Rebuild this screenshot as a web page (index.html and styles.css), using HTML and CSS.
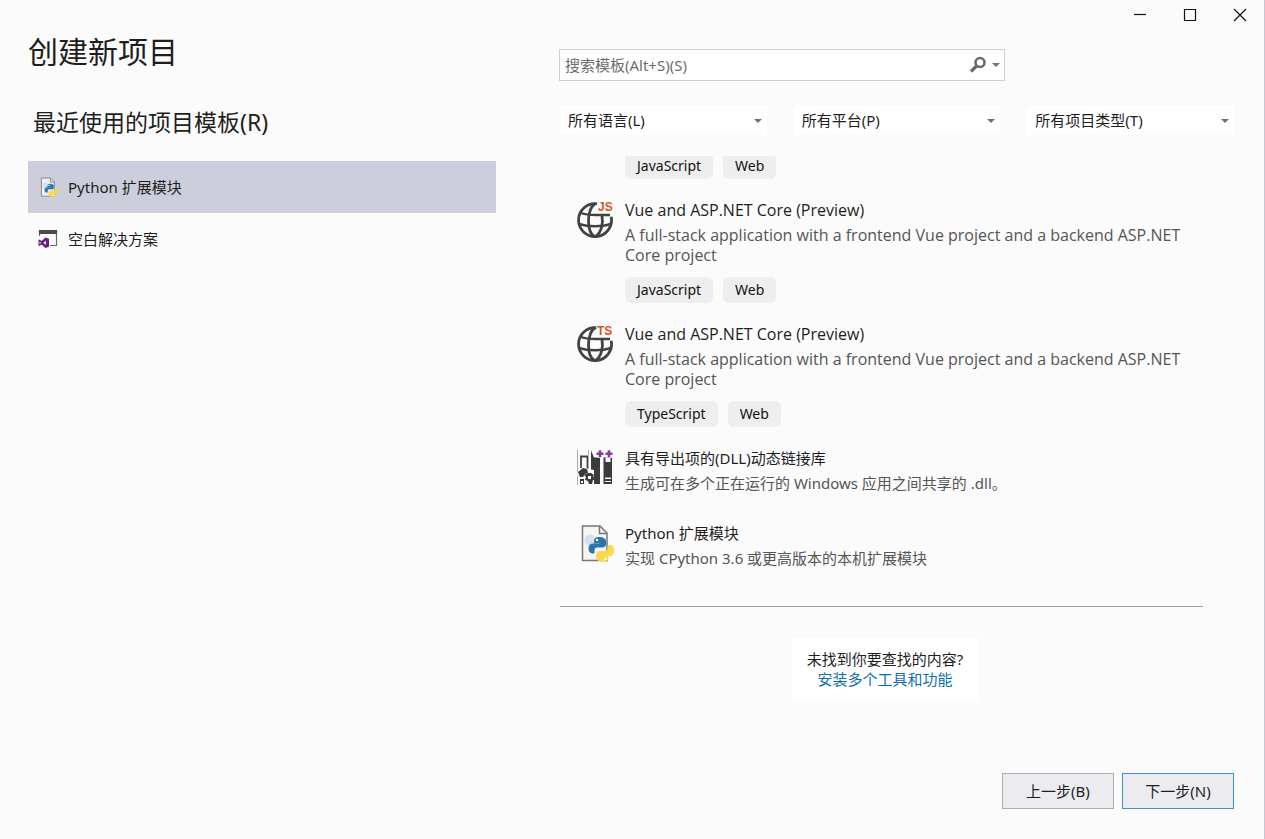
FILE: index.html
```html
<!DOCTYPE html>
<html lang="zh-CN">
<head>
<meta charset="utf-8">
<meta name="viewport" content="width=device-width, initial-scale=1">
<title>创建新项目</title>
<link rel="stylesheet" href="styles.css">
</head>
<body class="window">
<svg class="symbols" aria-hidden="true">
  <symbol id="python-file" viewBox="0 0 38 38">
    <path d="M6.500 2h17.500l7 7v27.500h-24.500z" fill="#f3f3f4" fill-opacity=".85" stroke="#77777a" stroke-width="1.500"/>
    <path d="M23.500 2v7.500h7.500" fill="none" stroke="#77777a" stroke-width="1.500"/>
    <circle cx="14" cy="16" r="5.500" fill="#cfe2ef"/>
    <path d="M23 13.500c-4 0-4.500 1.500-4.500 3.500v2h6v1h-8c-2.500 0-3.500 2-3.500 4.500s1 4.500 3 4.500h2v-2.500c0-2.500 1.500-3.500 3.500-3.500h5c2 0 3-1 3-3v-3c0-2-2-3.500-6.500-3.500z" fill="#2f73ab" stroke="#2f73ab"/>
    <path d="M27.500 37.200c4 0 4.500-1.500 4.500-3.500v-1.200h-5.500v-1h7.500c2.500 0 3.500-2 3.500-5s-1-5-3-5h-2.500v2.500c0 2.500-1.500 3.500-3.500 3.500h-5c-2 0-3 1-3 3v3.200c0 2 2 3.500 7 3.500z" fill="#fbd94f" stroke="#fbd94f"/>
    <circle cx="21" cy="16" r="1.200" fill="#fff"/><circle cx="29.500" cy="35" r="1.200" fill="#fff"/>
  </symbol>
  <symbol id="globe" viewBox="0 0 38 38">
    <g fill="none" stroke="#424242" stroke-width="2.800">
      <path d="M21 2.700a16.500 16.500 0 1 0 14.200 13"/>
      <path d="M19 3c-4 2-6.500 9-6.500 17s2.500 13.500 6 15.500"/>
      <path d="M26 14c1.500 9-1 18-6.500 21.500"/>
      <path d="M5 12c4 1.500 9 2 15 2h14" stroke-width="2.400"/>
      <path d="M3 23c9 3 23 3 32 0" stroke-width="2.400"/>
    </g>
  </symbol>
  <symbol id="arrow" viewBox="0 0 8 4"><path d="M0 0h8l-4 4z" fill="#717171"/></symbol>
</svg>

<header class="titlebar">
  <button class="caption" type="button" aria-label="最小化"><svg width="14" height="14"><path d="M1 6.500h12"/></svg></button>
  <button class="caption" type="button" aria-label="最大化"><svg width="14" height="14"><path d="M1.500 1.500h11v11h-11z"/></svg></button>
  <button class="caption" type="button" aria-label="关闭"><svg width="14" height="14"><path d="M1 1l12 12M13 1l-12 12"/></svg></button>
</header>

<main class="content">
  <section class="recent">
    <h1 class="title">创建新项目</h1>
    <h2 class="subtitle">最近使用的项目模板(R)</h2>
    <ul class="recent-list">
      <li><button class="recent-item selected" type="button">
        <svg class="small-icon" viewBox="0 0 38 38"><use href="#python-file"/></svg>
        <span>Python 扩展模块</span>
      </button></li>
      <li><button class="recent-item" type="button">
        <svg class="small-icon" viewBox="0 0 20 20">
          <path d="M1.500 7V1.500h17v15H12" fill="none" stroke="#6b6b6b" stroke-width="1.200"/>
          <path d="M1 1h18v4H1z" fill="#4a4a4a"/>
          <path d="M7.500 8.500l3.500 1.200v8l-3.500 1.300-4-3.500-2 1.500-1-.500v-5.500l1-.500 2 1.500zM8 11.800l-2.700 2 2.700 2zM1.600 12.400v2.800l1.400-1.400z" fill="#68217a" fill-rule="evenodd"/>
        </svg>
        <span>空白解决方案</span>
      </button></li>
    </ul>
  </section>

  <section class="browse">
    <form class="search">
      <input class="search-input" type="text" aria-label="搜索模板" placeholder="搜索模板(Alt+S)(S)">
      <button class="search-button" type="button" aria-label="搜索">
        <svg width="18" height="18" viewBox="0 0 18 18"><circle cx="11" cy="6.500" r="4.500" fill="none" stroke="#6a6a6a" stroke-width="2.600"/><path d="M8 9.500l-6 6" stroke="#6a6a6a" stroke-width="3.200"/></svg>
        <svg class="arrow"><use href="#arrow"/></svg>
      </button>
    </form>

    <div class="filters">
      <div class="filter"><select aria-label="语言"><option>所有语言(L)</option></select><svg class="arrow"><use href="#arrow"/></svg></div>
      <div class="filter"><select aria-label="平台"><option>所有平台(P)</option></select><svg class="arrow"><use href="#arrow"/></svg></div>
      <div class="filter"><select aria-label="项目类型"><option>所有项目类型(T)</option></select><svg class="arrow"><use href="#arrow"/></svg></div>
    </div>

    <div class="results">
      <ul class="templates">
        <li class="template partial">
          <div class="details"><div class="tags"><span class="tag">JavaScript</span><span class="tag">Web</span></div></div>
        </li>
        <li class="template">
          <svg class="icon" viewBox="0 0 38 38"><use href="#globe"/><text class="badge" x="22" y="10">JS</text></svg>
          <div class="details" lang="en">
            <h3 class="name">Vue and ASP.NET Core (Preview)</h3>
            <p class="description">A full-stack application with a frontend Vue project and a backend ASP.NET Core project</p>
            <div class="tags"><span class="tag">JavaScript</span><span class="tag">Web</span></div>
          </div>
        </li>
        <li class="template">
          <svg class="icon" viewBox="0 0 38 38"><use href="#globe"/><text class="badge" x="21" y="10">TS</text></svg>
          <div class="details" lang="en">
            <h3 class="name">Vue and ASP.NET Core (Preview)</h3>
            <p class="description">A full-stack application with a frontend Vue project and a backend ASP.NET Core project</p>
            <div class="tags"><span class="tag">TypeScript</span><span class="tag">Web</span></div>
          </div>
        </li>
        <li class="template">
          <svg class="icon" viewBox="0 0 38 38">
            <path d="M1.500 1v35M12.500 1v5" stroke="#aaa" stroke-width="1"/>
            <path d="M5 19V7.500h6.500V20" fill="none" stroke="#424242" stroke-width="1.800"/>
            <path d="M15 1.500l3 7h6V35h-6v-9l-3-5z" fill="#3b3b3d"/>
            <path d="M27.500 8.500h8.500V35h-8.500z" fill="#3b3b3d"/>
            <path d="M29.500 9h5v4h-5zM29 28.500h6v1.500h-6zM29 32h6v1h-6z" fill="#fafafa"/>
            <path d="M1 24l7-7 4 3 6 1v7l-3 8H3z" fill="#fafafa"/>
            <path d="M2 23l5-4 4 1 1 4-3 1-2 3H4z" fill="#3b3b3d"/>
            <path d="M12 24h3l3 2-1 2h2v3h-2l-1 4h-3l-1-3-3-1 1-3-2-2zM4 30h4v5H4z" fill="#3b3b3d"/>
            <path d="M12 27h3v3h-3zM5 32h2v2H5z" fill="#fafafa"/>
            <path d="M20 4.700h8M24 .700v8M29 4.700h8M33 .700v8" stroke="#fafafa" stroke-width="5"/>
            <path d="M20.500 4.700h7M24 1.200v7M29.500 4.700h7M33 1.200v7" stroke="#8a3b96" stroke-width="2.600"/>
          </svg>
          <div class="details">
            <h3 class="name">具有导出项的(DLL)动态链接库</h3>
            <p class="description">生成可在多个正在运行的 Windows 应用之间共享的 .dll。</p>
          </div>
        </li>
        <li class="template">
          <svg class="icon" viewBox="0 0 38 38"><use href="#python-file"/></svg>
          <div class="details">
            <h3 class="name">Python 扩展模块</h3>
            <p class="description">实现 CPython 3.6 或更高版本的本机扩展模块</p>
          </div>
        </li>
      </ul>
      <hr class="divider">
      <div class="more">
        <p>未找到你要查找的内容?</p>
        <a href="#">安装多个工具和功能</a>
      </div>
    </div>
  </section>
</main>

<footer class="actions">
  <button class="action" type="button">上一步(B)</button>
  <button class="action primary" type="button">下一步(N)</button>
</footer>
</body>
</html>
```

FILE: styles.css
```css
*, *::before, *::after { box-sizing: border-box; }

.window {
  display: flex;
  flex-direction: column;
  min-height: 100vh;
  margin: 0;
  box-shadow: inset -1px 0 #c6c7d6;
  background: #fbfbfb;
  color: #1e1e1e;
  font: 15px/20px "Noto Sans", "Noto Sans CJK SC", sans-serif;
}

.window button, .window input, .window select { color: inherit; font: inherit; }
h1, h2, h3, p, ul { margin: 0; padding: 0; font-weight: inherit; }
ul { list-style: none; }
.symbols { position: absolute; width: 0; height: 0; }
.arrow { flex: none; width: 8px; height: 4px; }

.titlebar { display: flex; justify-content: flex-end; height: 30px; }
.caption {
  display: flex;
  align-items: center;
  justify-content: center;
  width: 50px;
  padding: 0;
  border: 0;
  background: none;
}
.caption path { fill: none; stroke: #111; stroke-width: 1.2; }

.content {
  display: grid;
  flex: 1;
  grid-template-columns: 468fr 675fr;
  gap: 63px;
  padding: 0 31px 0 28px;
}

.title { padding-top: 2px; font-size: 30px; line-height: 40px; }
.subtitle { padding: 34px 0 0 5px; font-size: 23px; line-height: 32px; }
.recent-list { padding-top: 23px; }
.recent-item {
  display: flex;
  align-items: center;
  gap: 10px;
  width: 100%;
  height: 52px;
  padding: 0 10px;
  border: 0;
  background: none;
  text-align: left;
}
.window .selected { background: #cccedb; }
.small-icon { width: 20px; height: 20px; }

.browse { min-width: 0; padding-top: 19px; }
.search {
  display: flex;
  width: 66%;
  height: 32px;
  border: 1px solid #cccedb;
  background: #fff;
}
.search-input { flex: 1; min-width: 0; padding: 0 5px; border: 0; background: none; }
.search-input::placeholder { color: #6d6d6d; opacity: 1; }
.search-button {
  display: flex;
  align-items: center;
  gap: 5px;
  padding: 0 4px;
  border: 0;
  background: none;
}

.filters {
  display: grid;
  grid-template-columns: repeat(3, 1fr);
  gap: 27px;
  margin-top: 25px;
  padding-left: 1px;
}
.filter { display: flex; align-items: center; height: 29px; padding-right: 5px; background: #fff; }
.filter select { flex: 1; min-width: 0; padding: 0 8px 2px; border: 0; background: none; appearance: none; }

.results { margin-top: 21px; padding-right: 23px; }
.templates { overflow: hidden; }
.template { display: flex; gap: 11px; min-height: 75px; padding: 0 0 21px 17px; }
.partial { min-height: 0; margin-top: -3px; padding-left: 66px; }
.icon { flex: none; width: 38px; height: 38px; margin-top: 1px; overflow: visible; }
.badge {
  fill: #d9531e;
  stroke: #fbfbfb;
  stroke-width: 2px;
  paint-order: stroke;
  font: 700 12px/12px "Liberation Sans", sans-serif;
}
.name { font-size: 15px; }
.description { margin-top: 5px; color: #555; }
.details:lang(en) .name,
.details:lang(en) .description { font-family: "Open Sans", sans-serif; font-size: 16px; }
.tags { display: flex; gap: 10px; }
.description + .tags { margin-top: 12px; }
.tag { padding: 3px 12px; border-radius: 6px; background: #eee; color: #111; font-size: 14px; }

.divider { height: 1px; margin: 8px 8px 0 1px; border: 0; background: #9a9ba5; }
.more {
  width: max-content;
  margin: 31px auto 0;
  padding: 11px 15px;
  background: #fff;
  text-align: center;
}
.more a { color: #0e70a8; text-decoration: none; }

.actions { display: flex; justify-content: flex-end; gap: 8px; padding: 0 31px; margin-bottom: 30px; }
.action { width: 112px; height: 36px; border: 1px solid #acacac; background: #ececf0; }
.primary { border-color: #3c93c8; }
```
